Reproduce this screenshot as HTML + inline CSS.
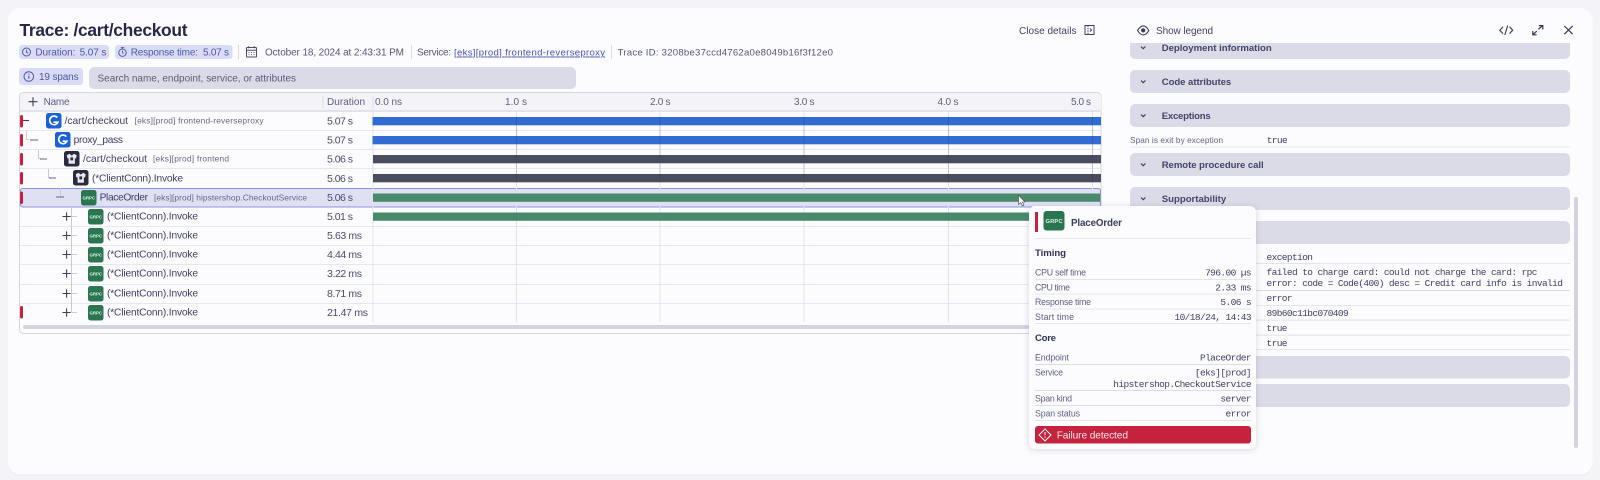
<!DOCTYPE html>
<html><head><meta charset="utf-8"><title>Trace: /cart/checkout</title>
<style>
html,body{margin:0;padding:0;width:1600px;height:480px;overflow:hidden;background:#f3f3f8}
svg{display:block;filter:blur(.3px)}
text{font-family:"Liberation Sans",sans-serif;font-size:10px;fill:#3f3f66}
.t{font-size:10.2px;fill:#3d3d62}
.s{font-size:8.4px;fill:#66668c}
.d{font-size:10.5px;fill:#4a4a70}
.h{font-size:10px;fill:#5d5d85}
.c{font-size:10px;fill:#5257a8}
.m{font-family:"Liberation Mono",monospace;font-size:9.5px;letter-spacing:-.6px;fill:#3f3f66}
.l{font-size:8.8px;fill:#606088}
.a{font-size:9.6px;fill:#44446a;font-weight:700}
.g{font-size:4.4px;font-weight:700;fill:#dff0e6;text-anchor:middle}
</style></head><body>
<svg width="1600" height="480" viewBox="0 0 1600 480" xmlns="http://www.w3.org/2000/svg">
<defs>
<filter id="sh" x="-10%" y="-10%" width="120%" height="120%"><feDropShadow dx="0" dy="1" stdDeviation="3" flood-color="#40406a" flood-opacity=".22"/></filter>
<g id="gw"><rect width="15.5" height="15.5" rx="2.5" fill="#1a62d6"/><path d="M11.3 4.6A4.3 4.3 0 1 0 11.9 9.2H7.6" fill="none" stroke="#fff" stroke-width="1.7"/></g>
<g id="ts"><rect width="15.5" height="15.5" rx="2.5" fill="#2b2b3f"/><path d="M5.4 2.8 2.8 4.2 3.4 7.4H4.6V12.8H10.9V7.4H12.1L12.7 4.2 10.1 2.8 7.75 4.6Z" fill="#e8e8ee"/><path d="M6.4 6.4h2.7v3H6.4z" fill="#2b2b3f"/></g>
<rect id="gb" width="15.5" height="15.5" rx="2.5" fill="#2a7650"/>
</defs>

<rect width="1600" height="480" fill="#f3f3f8"/>
<rect x="8" y="8.5" width="1584.5" height="467" rx="12" fill="#e9e9f1"/>
<rect x="8" y="8" width="1584.5" height="466.5" rx="12" fill="#fcfcfe"/>

<text x="19.5" y="36" textLength="168" style="font-size:17.4px;font-weight:700;fill:#27274a">Trace: /cart/checkout</text>

<!-- chips -->
<rect x="19" y="45" width="90" height="14" rx="3" fill="#d9dcf6"/>
<circle cx="26.5" cy="52" r="4" fill="none" stroke="#5257a8" stroke-width="1"/><path d="M26.5 49.6V52.2L28.2 53.2" fill="none" stroke="#5257a8" stroke-width=".9"/>
<text class="c" x="35.4" y="55.5" textLength="40">Duration:</text>
<text class="c" x="79.6" y="55.5" textLength="26.8">5.07 s</text>
<rect x="115" y="45" width="117.5" height="14" rx="3" fill="#d9dcf6"/>
<circle cx="122.5" cy="52.7" r="3.7" fill="none" stroke="#5257a8" stroke-width="1"/><path d="M120.8 47.6h3.4M122.5 47.6v1.4M122.5 50.8v2l1.2.6" fill="none" stroke="#5257a8" stroke-width=".9"/>
<text class="c" x="130.7" y="55.5" textLength="67.3">Response time:</text>
<text class="c" x="203" y="55.5" textLength="26">5.07 s</text>
<rect x="238" y="45" width="1" height="14" fill="#dcdce6"/>
<g fill="none" stroke="#4d4d72" stroke-width="1"><rect x="246.5" y="47.5" width="10" height="9.5" rx=".8"/><path d="M246.5 50.2h10M248.8 46v2.4M254.2 46v2.4"/><path d="M248.5 52.5h1M251 52.5h1M253.5 52.5h1M248.5 54.7h1M251 54.7h1M253.5 54.7h1" stroke-width=".9"/></g>
<text class="h" x="265" y="55.5" textLength="139" style="fill:#55557c">October 18, 2024 at 2:43:31 PM</text>
<rect x="411" y="45" width="1" height="14" fill="#dcdce6"/>
<text class="h" x="417" y="55.5" textLength="34" style="fill:#55557c">Service:</text>
<text x="454" y="55.5" textLength="151" text-decoration="underline" style="fill:#4a50b8;font-size:9.6px">[eks][prod] frontend-reverseproxy</text>
<rect x="611" y="45" width="1" height="14" fill="#dcdce6"/>
<text class="h" x="617.6" y="55.5" textLength="215.4" style="fill:#55557c;font-size:9.6px">Trace ID: 3208be37ccd4762a0e8049b16f3f12e0</text>

<!-- spans + search -->
<rect x="19" y="68" width="64" height="17" rx="3" fill="#d9dcf6"/>
<circle cx="28.8" cy="76.5" r="4.8" fill="none" stroke="#5257a8" stroke-width="1"/><path d="M28.8 75.6v3.2M28.8 73.6v1" stroke="#5257a8" stroke-width="1.1"/>
<text class="c" x="39" y="80" textLength="39.6">19 spans</text>
<rect x="89" y="67" width="487" height="22" rx="5" fill="#dbdbe7"/>
<text x="97.5" y="81.5" textLength="198.5" style="fill:#5a5a7e">Search name, endpoint, service, or attributes</text>

<!-- table -->
<rect x="19.5" y="92.5" width="1081.5" height="241" rx="4" fill="#fcfcfe" stroke="#d4d4e2"/>
<path d="M20 111V97a4 4 0 0 1 4-4H1097a4 4 0 0 1 4 4V111Z" fill="#f3f3f8"/>
<rect x="20" y="110.5" width="1081" height="1.2" fill="#d6d6e3"/>
<path d="M28.5 101.7h9M33 97.2v9" stroke="#3d3d5e" stroke-width="1.1" fill="none"/>
<text class="h" x="43.6" y="105" textLength="26">Name</text>
<rect x="322.5" y="96" width="1" height="13" fill="#dcdce6"/>
<text class="h" x="327" y="105" textLength="38">Duration</text>
<rect x="372.5" y="96" width="1" height="13" fill="#dcdce6"/>
<text class="h" x="375" y="105" textLength="27">0.0 ns</text>
<text class="h" x="505" y="105" textLength="22">1.0 s</text>
<text class="h" x="650" y="105" textLength="20.5">2.0 s</text>
<text class="h" x="794" y="105" textLength="20.5">3.0 s</text>
<text class="h" x="937.5" y="105" textLength="21">4.0 s</text>
<text class="h" x="1071" y="105" textLength="20">5.0 s</text>

<!-- row lines -->
<g fill="#e7e7f1">
<rect x="20" y="130" width="1081" height="1"/><rect x="20" y="149" width="1081" height="1"/><rect x="20" y="168" width="1081" height="1"/><rect x="20" y="226" width="1081" height="1"/><rect x="20" y="245" width="1081" height="1"/><rect x="20" y="264" width="1081" height="1"/><rect x="20" y="284" width="1081" height="1"/><rect x="20" y="303" width="1081" height="1"/>
</g>
<rect x="20.5" y="188.5" width="1080" height="18.5" rx="2" fill="#dfe1f3" stroke="#8f93dc"/>
<!-- grid -->
<g fill="#e2e2ed"><rect x="372.5" y="112" width="1" height="210"/><rect x="516" y="112" width="1" height="210"/><rect x="659.5" y="112" width="1" height="210"/><rect x="803.5" y="112" width="1" height="210"/><rect x="948" y="112" width="1" height="210"/><rect x="1092" y="112" width="1" height="210"/></g>
<!-- bars -->
<rect x="372.5" y="117" width="728.5" height="8.3" fill="#326bd1"/>
<rect x="372.5" y="136" width="728.5" height="8.3" fill="#326bd1"/>
<rect x="373" y="155" width="728" height="8.3" fill="#4a4d5e"/>
<rect x="373" y="174" width="728" height="8.3" fill="#4a4d5e"/>
<rect x="373" y="193.5" width="727" height="8.3" fill="#4a8a6c"/>
<rect x="373" y="212.5" width="660" height="8.3" fill="#4a8a6c"/>
<g fill="#2c2c45" opacity=".18"><rect x="516" y="117" width="1" height="65"/><rect x="659.5" y="117" width="1" height="65"/><rect x="803.5" y="117" width="1" height="65"/><rect x="948" y="117" width="1" height="65"/><rect x="1092" y="117" width="1" height="65"/></g>

<!-- error markers -->
<g fill="#c6213d">
<rect x="20" y="115" width="3" height="12.5" rx="1.5"/><rect x="20" y="134" width="3" height="12.5" rx="1.5"/><rect x="20" y="153" width="3" height="12.5" rx="1.5"/><rect x="20" y="172" width="3" height="12.5" rx="1.5"/><rect x="20" y="191.5" width="3" height="12.5" rx="1.5"/><rect x="20" y="306" width="3" height="12.5" rx="1.5"/>
</g>

<!-- tree -->
<g fill="none" stroke="#c9c9d9" stroke-width="1">
<path d="M26.5 131V139.5H29M38.5 150V158.5H41M48.5 169V177.5H51M60.5 188V196.5H63M71.5 207V312M71.5 216.5H77M71.5 235.5H77M71.5 254.5H77M71.5 273.5H77M71.5 293.5H77M71.5 312.5H77"/>
</g>
<g fill="none" stroke="#3e3e5c" stroke-width="1.1">
<path d="M23 120.5H29"/>
<path d="M30 140H38M40 159H47M49 178H56M56 197H64" stroke="#6a6a82"/>
<path d="M62.5 216.5H70.7M66.6 212.4V220.6M62.5 235.5H70.7M66.6 231.4V239.6M62.5 254.5H70.7M66.6 250.4V258.6M62.5 273.5H70.7M66.6 269.4V277.6M62.5 293.5H70.7M66.6 289.4V297.6M62.5 312.5H70.7M66.6 308.4V316.6"/>
</g>

<!-- icons -->
<use href="#gw" x="46" y="113"/>
<use href="#gw" x="55" y="132"/>
<use href="#ts" x="64" y="151"/>
<use href="#ts" x="73" y="170"/>
<use href="#gb" x="81" y="190"/><text class="g" x="88.8" y="199.4" textLength="12.5">GRPC</text>
<use href="#gb" x="88" y="209"/><text class="g" x="95.8" y="218.4" textLength="12.5">GRPC</text>
<use href="#gb" x="88" y="228"/><text class="g" x="95.8" y="237.4" textLength="12.5">GRPC</text>
<use href="#gb" x="88" y="247"/><text class="g" x="95.8" y="256.4" textLength="12.5">GRPC</text>
<use href="#gb" x="88" y="266"/><text class="g" x="95.8" y="275.4" textLength="12.5">GRPC</text>
<use href="#gb" x="88" y="286"/><text class="g" x="95.8" y="295.4" textLength="12.5">GRPC</text>
<use href="#gb" x="88" y="305"/><text class="g" x="95.8" y="314.4" textLength="12.5">GRPC</text>

<!-- names -->
<text class="t" x="64.6" y="124" textLength="63.4">/cart/checkout</text>
<text class="s" x="134.6" y="123.5" textLength="129">[eks][prod] frontend-reverseproxy</text>
<text class="t" x="73.6" y="143" textLength="49.4">proxy_pass</text>
<text class="t" x="83" y="162" textLength="64">/cart/checkout</text>
<text class="s" x="153" y="161.5" textLength="76">[eks][prod] frontend</text>
<text class="t" x="92" y="181.5" textLength="91">(*ClientConn).Invoke</text>
<text class="t" x="99.6" y="200.5" textLength="48.4">PlaceOrder</text>
<text class="s" x="154" y="200.5" textLength="153">[eks][prod] hipstershop.CheckoutService</text>
<text class="t" x="107" y="219.5" textLength="91">(*ClientConn).Invoke</text>
<text class="t" x="107" y="238.5" textLength="91">(*ClientConn).Invoke</text>
<text class="t" x="107" y="257.5" textLength="91">(*ClientConn).Invoke</text>
<text class="t" x="107" y="276.5" textLength="91">(*ClientConn).Invoke</text>
<text class="t" x="107" y="296.5" textLength="91">(*ClientConn).Invoke</text>
<text class="t" x="107" y="315.5" textLength="91">(*ClientConn).Invoke</text>

<!-- durations -->
<text class="d" x="327" y="124.5" textLength="26">5.07 s</text>
<text class="d" x="327" y="143.5" textLength="26">5.07 s</text>
<text class="d" x="327" y="162.5" textLength="26">5.06 s</text>
<text class="d" x="327" y="182" textLength="26">5.06 s</text>
<text class="d" x="327" y="201" textLength="26">5.06 s</text>
<text class="d" x="327" y="220" textLength="26">5.01 s</text>
<text class="d" x="327" y="239" textLength="35">5.63 ms</text>
<text class="d" x="327" y="258" textLength="35">4.44 ms</text>
<text class="d" x="327" y="277" textLength="35">3.22 ms</text>
<text class="d" x="327" y="297" textLength="35">8.71 ms</text>
<text class="d" x="327" y="316" textLength="41">21.47 ms</text>

<!-- h scrollbar -->
<rect x="23" y="325" width="1076" height="4" rx="2" fill="#d3d3e2"/>

<!-- close details -->
<text class="h" x="1019" y="34" textLength="57.5" style="fill:#3f3f64">Close details</text>
<g fill="none" stroke="#3f3f64" stroke-width="1"><rect x="1085" y="25.5" width="9" height="9"/><path d="M1088 25.5v9" stroke-dasharray="1.4 1"/><path d="M1090 28.5l1.6 1.5-1.6 1.5"/></g>

<!-- right top -->
<g fill="none" stroke="#3c3c60" stroke-width="1.1"><path d="M1137.5 30.5c2-3.4 4-4.6 5.7-4.6s3.8 1.2 5.6 4.6c-1.8 3.2-3.8 4.4-5.6 4.4s-3.7-1.2-5.7-4.4Z"/><circle cx="1143.2" cy="30.4" r="1.6" fill="#3c3c60"/></g>
<text class="h" x="1156" y="34" textLength="57" style="fill:#3f3f64">Show legend</text>
<path d="M1503 26.8 1499.8 30.2 1503 33.6M1509.5 26.8 1512.7 30.2 1509.5 33.6M1507.7 25.5 1504.8 35" fill="none" stroke="#34345a" stroke-width="1.1"/>
<path d="M1538.5 29.2 1542.6 25.4M1538.8 25.6H1542.8V29.4M1536.8 31 1532.8 34.8M1532.8 31V34.8H1536.6" fill="none" stroke="#34345a" stroke-width="1.2"/>
<path d="M1564.3 26 1572.7 34.2M1572.7 26 1564.3 34.2" fill="none" stroke="#34345a" stroke-width="1.2"/>

<!-- accordions -->
<path d="M1130 43H1570V54a5 5 0 0 1-5 5H1135a5 5 0 0 1-5-5Z" fill="#dbdbe7"/>
<rect x="1130" y="70" width="440" height="23" rx="5" fill="#dbdbe7"/>
<rect x="1130" y="104" width="440" height="23" rx="5" fill="#dbdbe7"/>
<rect x="1130" y="153" width="440" height="23" rx="5" fill="#dbdbe7"/>
<rect x="1130" y="187" width="440" height="23" rx="5" fill="#dbdbe7"/>
<rect x="1130" y="221" width="440" height="23" rx="5" fill="#dbdbe7"/>
<rect x="1130" y="356" width="440" height="22.5" rx="5" fill="#dbdbe7"/>
<rect x="1130" y="384" width="440" height="23" rx="5" fill="#dbdbe7"/>
<g fill="none" stroke="#3c3c60" stroke-width="1.2"><path d="M1141 46.5l2.2 2.2 2.2-2.2M1141 80.5l2.2 2.2 2.2-2.2M1141 114.5l2.2 2.2 2.2-2.2M1141 163.5l2.2 2.2 2.2-2.2M1141 197.5l2.2 2.2 2.2-2.2"/></g>
<text class="a" x="1161.7" y="51" textLength="110">Deployment information</text>
<text class="a" x="1161.7" y="85" textLength="69.5">Code attributes</text>
<text class="a" x="1161.7" y="119" textLength="49">Exceptions</text>
<text class="a" x="1161.7" y="168" textLength="102">Remote procedure call</text>
<text class="a" x="1161.7" y="202" textLength="64.5">Supportability</text>

<text class="l" x="1130" y="143" textLength="93" style="font-size:8.2px">Span is exit by exception</text>
<text class="m" x="1266.7" y="143">true</text>
<rect x="1130" y="146.5" width="440" height="1" fill="#e6e6f1"/>

<text class="m" x="1266.5" y="260">exception</text>
<rect x="1130" y="263" width="440" height="1" fill="#e3e3f1"/>
<text class="m" x="1266.5" y="275">failed to charge card: could not charge the card: rpc</text>
<text class="m" x="1266.5" y="286">error: code = Code(400) desc = Credit card info is invalid</text>
<rect x="1130" y="290" width="440" height="1" fill="#d8d8ec"/>
<text class="m" x="1266.5" y="301">error</text>
<rect x="1130" y="305" width="440" height="1" fill="#e6e6f1"/>
<text class="m" x="1266.5" y="316">89b60c11bc070409</text>
<rect x="1130" y="319.5" width="440" height="1.2" fill="#e3e3ee"/>
<text class="m" x="1266.5" y="331">true</text>
<rect x="1130" y="334.5" width="440" height="1.2" fill="#e3e3ee"/>
<text class="m" x="1266.5" y="346">true</text>
<rect x="1130" y="349" width="440" height="1" fill="#e6e6f1"/>

<rect x="1574" y="197" width="4" height="251" rx="2" fill="#d3d3e2"/>

<!-- cursor -->
<path d="M1018.5 195V204.5L1020.8 202.6 1022.4 206 1024 205.2 1022.4 202H1025Z" fill="#fff" stroke="#444" stroke-width=".6"/>

<!-- popup -->
<rect x="1029" y="206" width="227" height="243" rx="6" fill="#fcfcfe" filter="url(#sh)"/>
<rect x="1035" y="212" width="3" height="20" rx=".5" fill="#c6213d"/>
<rect x="1043.5" y="211" width="21" height="19.5" rx="3" fill="#2a7650"/>
<text x="1054" y="222.8" text-anchor="middle" textLength="17" style="font-size:5.8px;font-weight:700;fill:#dff0e6">GRPC</text>
<text x="1071" y="226" textLength="51" style="font-size:9.8px;font-weight:700;fill:#3a3a5e">PlaceOrder</text>
<rect x="1035" y="238" width="216" height="1" fill="#e8e8f0"/>
<text x="1035" y="256" textLength="31" style="font-size:9.6px;font-weight:700;fill:#33335a">Timing</text>

<text class="l" x="1035" y="275.5" textLength="51">CPU self time</text>
<text class="m" x="1251" y="275.5" text-anchor="end">796.00 µs</text>
<rect x="1035" y="279" width="216" height="1" fill="#e3e3ee"/>
<text class="l" x="1035" y="290.5" textLength="35">CPU time</text>
<text class="m" x="1251" y="290.5" text-anchor="end">2.33 ms</text>
<rect x="1035" y="293.5" width="216" height="1" fill="#e3e3ee"/>
<text class="l" x="1035" y="305" textLength="56">Response time</text>
<text class="m" x="1251" y="305" text-anchor="end">5.06 s</text>
<rect x="1035" y="308.5" width="216" height="1" fill="#e3e3ee"/>
<text class="l" x="1035" y="320" textLength="39">Start time</text>
<text class="m" x="1251" y="320" text-anchor="end">10/18/24, 14:43</text>
<rect x="1035" y="323" width="216" height="1" fill="#e3e3ee"/>

<text x="1035" y="341" textLength="21" style="font-size:9.6px;font-weight:700;fill:#33335a">Core</text>
<text class="l" x="1035" y="360.5" textLength="34">Endpoint</text>
<text class="m" x="1251" y="360.5" text-anchor="end">PlaceOrder</text>
<rect x="1035" y="364" width="216" height="1" fill="#dcdcec"/>
<text class="l" x="1035" y="375.5" textLength="28">Service</text>
<text class="m" x="1251" y="375.5" text-anchor="end">[eks][prod]</text>
<text class="m" x="1251" y="387" text-anchor="end">hipstershop.CheckoutService</text>
<rect x="1035" y="390" width="216" height="1" fill="#dcdcec"/>
<text class="l" x="1035" y="401.5" textLength="37">Span kind</text>
<text class="m" x="1251" y="401.5" text-anchor="end">server</text>
<rect x="1035" y="405" width="216" height="1" fill="#dcdcec"/>
<text class="l" x="1035" y="416.5" textLength="45">Span status</text>
<text class="m" x="1251" y="416.5" text-anchor="end">error</text>
<rect x="1035" y="420" width="216" height="1" fill="#e3e3ee"/>

<rect x="1035" y="426" width="216" height="17.5" rx="3" fill="#c6223d"/>
<path d="M1045 429 1051 435 1045 441 1039 435Z" fill="none" stroke="#fff" stroke-width="1"/><path d="M1045 432v3.4M1045 436.6v1.2" stroke="#fff" stroke-width="1"/>
<text x="1056.7" y="438.5" textLength="71.3" style="font-size:10.2px;fill:#fbe9ec">Failure detected</text>
</svg>
</body></html>
